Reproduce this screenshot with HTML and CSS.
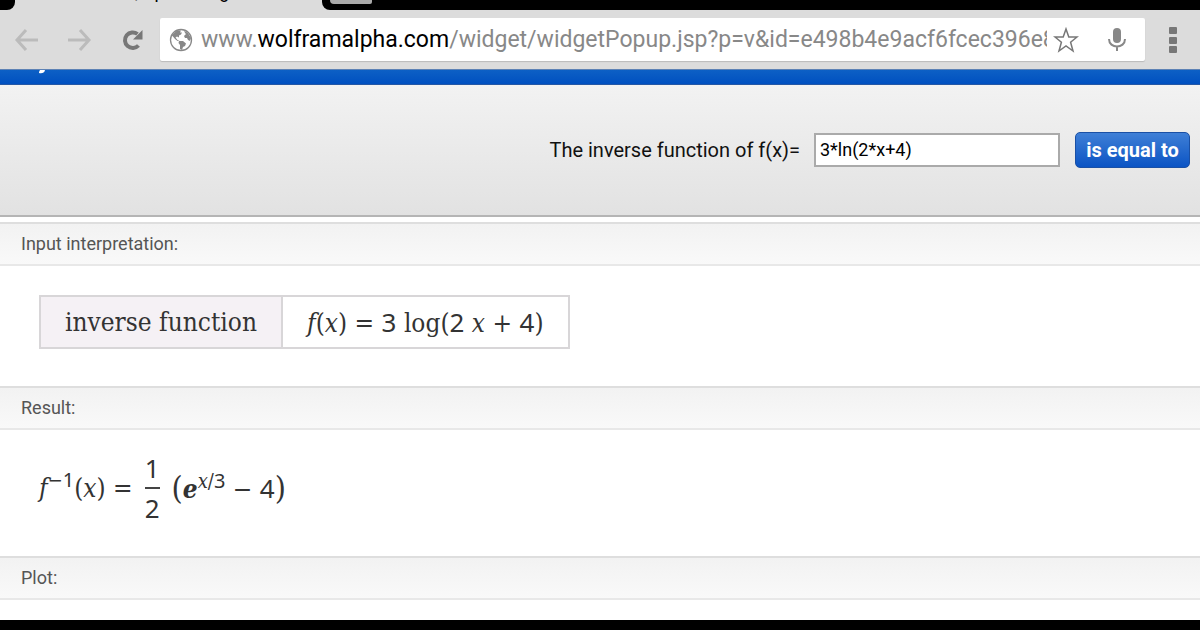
FILE: index.html
```html
<!DOCTYPE html>
<html lang="en">

<head>
    <meta charset="utf-8">
    <title>Wolfram|Alpha Widgets</title>
    <link rel="stylesheet" href="styles.css">
</head>

<body>
    <div class="tabs">
        <div class="tabs-left"></div>
        <div class="tab"><span class="tab-title">Wolfram|Alpha Widgets</span></div>
        <div class="tabs-right">
            <div class="new-tab"></div>
        </div>
    </div>
    <div class="toolbar">
        <button class="nav" aria-label="Back">
            <svg width="26" height="24" viewBox="0 0 26 24" fill="none" stroke="#bbb" stroke-width="3">
                <path d="M24 12H4M12 2L3 12l9 10" />
            </svg>
        </button>
        <button class="nav" aria-label="Forward">
            <svg width="26" height="24" viewBox="0 0 26 24" fill="none" stroke="#bbb" stroke-width="3">
                <path d="M1 12h20M13 2l9 10-9 10" />
            </svg>
        </button>
        <button class="nav reload" aria-label="Reload">
            <svg width="26" height="24" viewBox="0 0 26 24">
                <path d="M17.500 6A7.800 7.800 0 1 0 18.500 17.500" fill="none" stroke="#777" stroke-width="4" />
                <path d="M22.500 2v9.500H13z" fill="#777" />
            </svg>
        </button>
        <div class="address">
            <svg width="24" height="24" viewBox="0 0 24 24">
                <circle cx="12" cy="12" r="10.500" fill="#fff" stroke="#888" stroke-width="1.300" />
                <path d="M4 6l4-3.500 4 0-1 2 2 0-1 2-2 1 0 2-2-1-1.500 1 2 2.500 2 1-2 0-2.500-2-2.500-3-1.500 1zM15 2.500l4 2.500 3 5-1 3-2-1-1-2-2 0-1-2 2-2-1-1zM10 13l4 0 3 2.500-1 2.500-2 1-1 3-2-1 0-4-1.500-2z" fill="#888" />
            </svg>
            <div class="url"><span>www.</span><b>wolframalpha.com</b><span>/widget/widgetPopup.jsp?p=v&amp;id=e498b4e9acf6fcec396e8</span></div>
            <button class="icon" aria-label="Bookmark">
                <svg width="26" height="26" viewBox="0 0 26 26" fill="none" stroke="#777" stroke-width="1.500">
                    <path d="M13 2l2.800 8H24l-6.400 5.200L20 24l-7-5-7 5 2.400-8.800L2 10h8.200z" />
                </svg>
            </button>
            <button class="icon mic" aria-label="Voice search">
                <svg width="20" height="26" viewBox="0 0 20 26">
                    <rect x="6" y="1" width="8" height="15" rx="4" fill="#888" />
                    <path d="M2 12c0 10 16 10 16 0M10 19v5" fill="none" stroke="#888" stroke-width="2" />
                </svg>
            </button>
        </div>
        <button class="menu" aria-label="Menu">
            <svg width="8" height="28" viewBox="0 0 8 28" fill="#777">
                <rect y="1" width="8" height="7" rx="1" />
                <rect y="11" width="8" height="7" rx="1" />
                <rect y="20" width="8" height="7" rx="1" />
            </svg>
        </button>
    </div>

    <div class="banner">
        <svg width="8" height="4" viewBox="0 0 8 4"><path d="M2 0h5Q6 4 1 3V2z" fill="#fff" /></svg>
    </div>
    <form class="query">
        <label for="fx">The inverse function of f(x)=</label>
        <input type="text" id="fx" name="fx" value="3*ln(2*x+4)">
        <button type="button" class="submit">is equal to</button>
    </form>

    <div class="results">
        <h2>Input interpretation:</h2>
        <div class="pod input-pod">
            <table>
                <tr>
                    <th>inverse function</th>
                    <td><i>f</i>(<i>x</i>) = <span class="num">3</span> log(<span class="num">2</span> <i>x</i> + <span class="num">4</span>)</td>
                </tr>
            </table>
        </div>
        <h2>Result:</h2>
        <div class="pod result-pod">
            <div class="formula">
                <span><i>f</i><sup>−<span class="num">1</span></sup>(<i>x</i>) =</span>
                <span class="fraction num"><span>1</span><span class="bottom">2</span></span>
                <span class="group">
                    <span class="paren">(</span>
                    <span><i class="euler">e</i><sup><i>x</i>/<span class="num">3</span></sup> − <span class="num">4</span></span>
                    <span class="paren">)</span>
                </span>
            </div>
        </div>
        <h2>Plot:</h2>
    </div>
    <div class="bottom-bar"></div>
</body>

</html>
```

FILE: styles.css
```css
* {
    box-sizing: border-box;
}

body {
    margin: 0;
    min-height: 100vh;
    display: flex;
    flex-direction: column;
    background: #fff;
    font-family: Roboto, sans-serif;
    overflow: hidden;
}

button {
    border: none;
    background: none;
    padding: 0;
    font-family: inherit;
}

svg {
    display: block;
}

/* browser */
.tabs {
    display: flex;
    height: 10px;
    background: #dcdcdc;
}

.tabs-left {
    width: 15px;
    background: #000;
    border-radius: 0 0 8px 0;
}

.tab {
    display: flex;
    align-items: flex-end;
    width: 307px;
    padding: 0 0 4px 51px;
    overflow: hidden;
}

.tab-title {
    font-size: 18px;
    line-height: 28px;
    white-space: nowrap;
}

.tabs-right {
    flex: 1;
    padding-left: 8px;
    background: #000;
    border-radius: 0 0 0 8px;
}

.new-tab {
    width: 42px;
    height: 4px;
    background: #aaa;
    border-radius: 0 0 2px 4px;
}

.toolbar {
    display: flex;
    align-items: center;
    height: 59px;
    padding: 0 23px 0 14px;
    background: #dcdcdc;
}

.nav {
    width: 26px;
    margin-right: 27px;
}

.reload {
    margin-right: 14px;
}

.address {
    flex: 1;
    display: flex;
    align-items: center;
    min-width: 0;
    height: 43px;
    padding: 0 18px 0 9px;
    background: #fff;
    border-radius: 2px;
    box-shadow: 0 1px 1px #bbb;
}

.url {
    flex: 1;
    min-width: 0;
    margin-left: 8px;
    overflow: hidden;
    white-space: nowrap;
    font-size: 23px;
    line-height: 32px;
    color: #888;
}

.url b {
    font-weight: 400;
    color: #000;
}

.icon {
    margin-left: 6px;
}

.mic {
    margin-left: 28px;
}

.menu {
    margin-left: 24px;
}

/* widget */
.banner {
    height: 16px;
    padding-left: 38px;
    background: linear-gradient(#0d60c5, #0050c0);
    border-top: 1px solid #5d82b5;
    border-bottom: 1px solid #2457a5;
}

.query {
    display: flex;
    align-items: center;
    justify-content: flex-end;
    height: 132px;
    padding: 0 10px 1px 0;
    background: linear-gradient(#f2f2f2, #e2e2e2);
    border-bottom: 2px solid #b5b5b5;
}

.query label {
    font-size: 20px;
    color: #111;
}

.query input {
    width: 246px;
    height: 34px;
    margin: 0 15px 0 14px;
    padding: 0 4px;
    border: 2px solid #aaa;
    background: #fff;
    font-family: Roboto, sans-serif;
    font-size: 18px;
}

.submit {
    width: 115px;
    height: 36px;
    border: 1px solid #1a50a5;
    border-radius: 5px;
    background: linear-gradient(#3f7fd6, #0b54c4);
    color: #fff;
    font-size: 20px;
    font-weight: 700;
}

.results {
    flex: 1;
    padding-top: 5px;
}

h2 {
    margin: 0;
    height: 44px;
    padding-left: 21px;
    border-top: 2px solid #dedede;
    border-bottom: 2px solid #e8e8e8;
    background: linear-gradient(#f2f2f2, #f9f9f9);
    font-size: 18px;
    font-weight: 400;
    line-height: 40px;
    color: #555;
}

.pod {
    font-family: "DejaVu Serif Condensed", "DejaVu Serif", serif;
    font-size: 26px;
    color: #333;
}

.num {
    font-family: "Noto Sans", sans-serif;
}

.input-pod {
    padding: 29px 39px 37px;
}

table {
    border-collapse: collapse;
}

th,
td {
    height: 52px;
    padding: 0 24px;
    border: 2px solid #d8d6d8;
    font-weight: 400;
    line-height: 40px;
    white-space: nowrap;
}

th {
    background: #f5f1f5;
}

.result-pod {
    padding: 20px 39px 30px;
}

.formula {
    display: flex;
    align-items: center;
    height: 76px;
    gap: 12px;
}

.group {
    display: flex;
    align-items: center;
}

sup {
    font-size: 20px;
    line-height: 0;
}

.fraction {
    display: flex;
    flex-direction: column;
    line-height: 38px;
}

.bottom {
    border-top: 2px solid #444;
}

.paren {
    font-size: 32px;
}

.euler {
    font-weight: 700;
}

.bottom-bar {
    height: 10px;
    background: #000;
}
```
